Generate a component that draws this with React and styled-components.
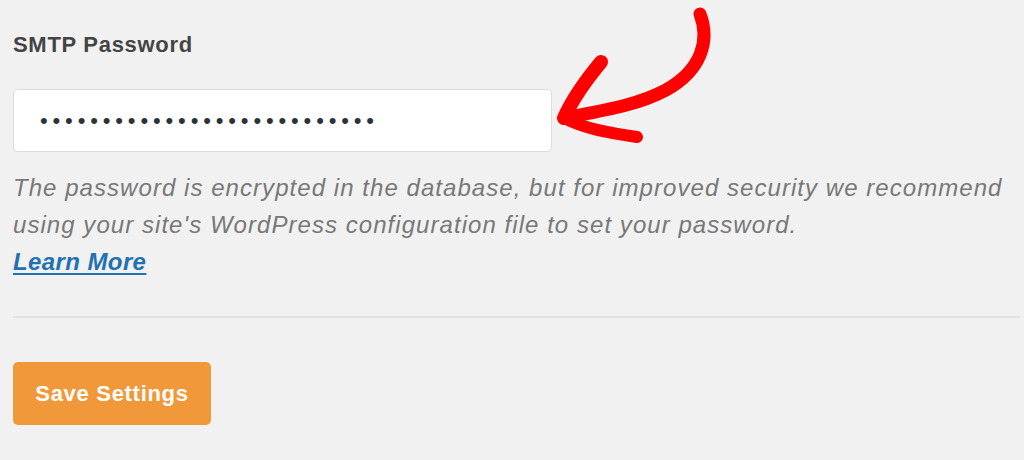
import React from "react";
import styled, { createGlobalStyle } from "styled-components";

const GlobalStyle = createGlobalStyle`
  html, body {
    margin: 0;
    padding: 0;
    background: #f1f1f1;
  }
  body {
    font-family: "Liberation Sans", Arial, sans-serif;
  }
`;

const Page = styled.div`
  position: relative;
  width: 1024px;
  height: 460px;
  box-sizing: border-box;
  padding: 32px 4px 0 13px;
  overflow: hidden;
`;

const Label = styled.label`
  display: block;
  font-size: 22px;
  line-height: 26px;
  font-weight: 600;
  letter-spacing: 0.7px;
  color: #444444;
`;

const PasswordInput = styled.input`
  display: block;
  box-sizing: border-box;
  width: 539px;
  height: 63px;
  margin-top: 31px;
  padding: 0 0 0 26px;
  background: #ffffff;
  border: 1px solid #dcdcde;
  border-radius: 5px;
  font-family: "Liberation Sans", Arial, sans-serif;
  font-size: 22px;
  letter-spacing: 4.85px;
  color: #2c3338;
  outline: none;
`;

const Description = styled.p`
  margin: 17px 0 0;
  font-size: 24px;
  line-height: 37px;
  letter-spacing: 1.05px;
  font-style: italic;
  color: #787878;
`;

const LearnMore = styled.a`
  font-weight: 700;
  letter-spacing: 0.4px;
  color: #2271b1;
  text-decoration: underline;
  text-underline-offset: 3px;
`;

const Divider = styled.hr`
  width: 1007px;
  margin: 36px 0 0;
  border: none;
  border-top: 2px solid #e2e2e2;
`;

const SaveButton = styled.button`
  display: block;
  width: 198px;
  height: 63px;
  margin-top: 44px;
  border: none;
  border-radius: 5px;
  background: #f1993a;
  color: #ffffff;
  font-family: "Liberation Sans", Arial, sans-serif;
  font-size: 22px;
  font-weight: 700;
  letter-spacing: 0.7px;
  cursor: pointer;
`;

const Arrow = styled.svg`
  position: absolute;
  left: 540px;
  top: 0;
  width: 200px;
  height: 150px;
  pointer-events: none;
`;

const App = () => {
  return (
    <>
      <GlobalStyle />
      <Page>
        <Label htmlFor="smtp-password">SMTP Password</Label>
        <PasswordInput
          id="smtp-password"
          type="password"
          readOnly
          defaultValue="abcdefghijklmnopqrstuvwxyza"
        />
        <Description>
          The password is encrypted in the database, but for improved security we recommend
          using your site's WordPress configuration file to set your password.
          <br />
          <LearnMore href="#">Learn More</LearnMore>
        </Description>
        <Divider />
        <SaveButton type="button">Save Settings</SaveButton>
        <Arrow viewBox="0 0 200 150">
          <g fill="none" stroke="#ff0000" strokeLinecap="round" strokeLinejoin="round">
            <path d="M160 14 C170 40, 162 70, 126 90 C96 106, 60 111, 24 118" strokeWidth="13" />
            <path d="M61 62 C46 80, 33 98, 24 118" strokeWidth="14" />
            <path d="M24 118 C45 129, 70 133, 97 137" strokeWidth="12" />
          </g>
        </Arrow>
      </Page>
    </>
  );
};

export default App;
